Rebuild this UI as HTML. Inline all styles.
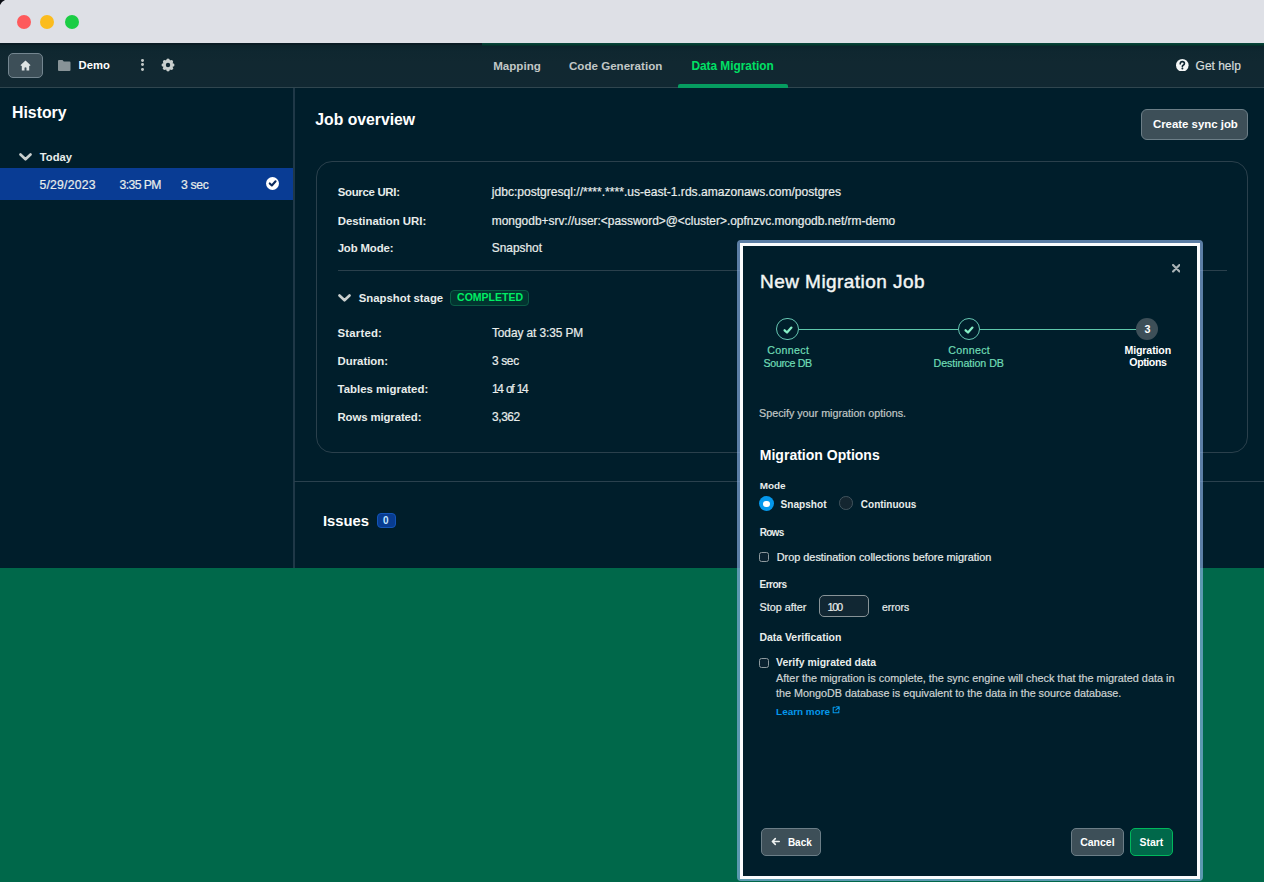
<!DOCTYPE html>
<html><head><meta charset="utf-8"><style>
html,body{margin:0;padding:0;}
body{width:1264px;height:882px;overflow:hidden;position:relative;background:#00684a;font-family:"Liberation Sans",sans-serif;}
.t{position:absolute;white-space:nowrap;line-height:1;}
.t:not([style*="font-weight"]){-webkit-text-stroke:0.2px currentColor;}
</style></head><body>
<div style="position:absolute;left:0;top:0;width:1264px;height:43.4px;background:#dee0e6;"></div>
<div style="position:absolute;left:0;top:43.4px;width:1264px;height:43.6px;background:linear-gradient(#0b2128 0px,#0f2730 8px,#112831 20px,#112832 100%);"></div>
<div style="position:absolute;left:0;top:87px;width:1264px;height:1px;background:#30464f;"></div>
<div style="position:absolute;left:0;top:43.4px;width:482px;height:2px;background:#0a1c24;"></div>
<div style="position:absolute;left:482px;top:43.4px;width:782px;height:2.2px;background:linear-gradient(#064a3c,#042c27);"></div>
<div style="position:absolute;left:0;top:88px;width:1264px;height:480px;background:#001e2b;"></div>
<div style="position:absolute;left:0;top:568px;width:1264px;height:314px;background:#00684a;"></div>
<svg style="position:absolute;left:0;top:0" width="6" height="6" viewBox="0 0 6 6"><path d="M0 0 L5 0 Q1.5 1.5 0 5 Z" fill="#0a0d14"/></svg>
<div style="position:absolute;left:16.5px;top:15.3px;width:14px;height:14px;border-radius:50%;background:#fe5a5c;"></div>
<div style="position:absolute;left:40.4px;top:15.3px;width:14px;height:14px;border-radius:50%;background:#fbbc1e;"></div>
<div style="position:absolute;left:64.5px;top:15.3px;width:14px;height:14px;border-radius:50%;background:#1bcd45;"></div>
<div style="position:absolute;left:8px;top:53px;width:33px;height:22.5px;border:1px solid #748690;border-radius:5px;background:#3d4f58;"></div>
<svg style="position:absolute;left:20px;top:59.5px" width="11" height="11" viewBox="0 0 11 11"><path d="M5.5 0.6 L10.6 5.2 L9.4 5.9 L9.2 5.7 L9.2 10.6 L6.5 10.6 L6.5 7.8 Q5.5 6.9 4.5 7.8 L4.5 10.6 L1.8 10.6 L1.8 5.7 L1.6 5.9 L0.4 5.2 Z" fill="#dfe4e3"/></svg>
<svg style="position:absolute;left:58px;top:59.5px" width="12.5" height="11" viewBox="0 0 12.5 11"><path d="M0 1 Q0 0 1 0 L4.5 0 L5.8 1.6 L11.5 1.6 Q12.5 1.6 12.5 2.6 L12.5 10 Q12.5 11 11.5 11 L1 11 Q0 11 0 10 Z" fill="#889397"/></svg>
<div class="t" style="left:78.60px;top:60.00px;font-size:11.230px;color:#ffffff;font-weight:700;">Demo</div>
<div style="position:absolute;left:141.2px;top:59.0px;width:2.8px;height:2.8px;border-radius:50%;background:#c1c7c6;"></div>
<div style="position:absolute;left:141.2px;top:63.4px;width:2.8px;height:2.8px;border-radius:50%;background:#c1c7c6;"></div>
<div style="position:absolute;left:141.2px;top:67.8px;width:2.8px;height:2.8px;border-radius:50%;background:#c1c7c6;"></div>
<svg style="position:absolute;left:160.6px;top:58.2px" width="14" height="14" viewBox="-7 -7 14 14"><g fill="#c9cfce"><circle cx="4.75" cy="0.00" r="1.75"/><circle cx="3.36" cy="3.36" r="1.75"/><circle cx="0.00" cy="4.75" r="1.75"/><circle cx="-3.36" cy="3.36" r="1.75"/><circle cx="-4.75" cy="0.00" r="1.75"/><circle cx="-3.36" cy="-3.36" r="1.75"/><circle cx="-0.00" cy="-4.75" r="1.75"/><circle cx="3.36" cy="-3.36" r="1.75"/><circle r="4.9"/></g><circle r="2.2" fill="#112733"/></svg>
<div class="t" style="left:493.20px;top:61.00px;font-size:11.580px;color:#c1c7c6;font-weight:700;">Mapping</div>
<div class="t" style="left:569.00px;top:61.00px;font-size:11.580px;color:#c1c7c6;font-weight:700;">Code Generation</div>
<div class="t" style="left:691.40px;top:61.00px;font-size:11.850px;color:#00e065;font-weight:700;">Data Migration</div>
<div style="position:absolute;left:677.5px;top:84px;width:110px;height:4px;background:#069c60;border-radius:2px 2px 0 0;"></div>
<svg style="position:absolute;left:1176.4px;top:58.9px" width="12.6" height="12.6" viewBox="0 0 16 16"><circle cx="8" cy="8" r="8" fill="#f4f6f6"/><path d="M5.4 6.1 Q5.5 3.4 8 3.4 Q10.7 3.4 10.7 5.8 Q10.7 7.3 9.1 8 Q8.1 8.5 8.1 9.6" stroke="#112733" stroke-width="2.1" fill="none" stroke-linecap="round"/><circle cx="8.1" cy="12.2" r="1.25" fill="#112733"/></svg>
<div class="t" style="left:1195.60px;top:60.00px;font-size:11.983px;color:#d5dcdc;">Get help</div>
<div style="position:absolute;left:293px;top:88px;width:2px;height:480px;background:#1f3847;"></div>
<div class="t" style="left:12.00px;top:105.00px;font-size:15.847px;color:#ffffff;font-weight:700;">History</div>
<svg style="position:absolute;left:19px;top:152.5px" width="13" height="8" viewBox="0 0 13 8"><path d="M1.5 1.5 L6.5 6.3 L11.5 1.5" stroke="#c9cfce" stroke-width="2.6" fill="none" stroke-linecap="round" stroke-linejoin="round"/></svg>
<div class="t" style="left:39.80px;top:152.00px;font-size:11.217px;color:#e8edeb;font-weight:700;">Today</div>
<div style="position:absolute;left:0;top:168px;width:293px;height:32px;background:#093c94;"></div>
<div class="t" style="left:39.40px;top:179.00px;font-size:12.200px;color:#e8edeb;letter-spacing:0.228px;">5/29/2023</div>
<div class="t" style="left:119.60px;top:179.00px;font-size:12.200px;color:#e8edeb;letter-spacing:-0.606px;">3:35 PM</div>
<div class="t" style="left:180.90px;top:179.00px;font-size:12.200px;color:#e8edeb;letter-spacing:-0.290px;">3 sec</div>
<svg style="position:absolute;left:265.8px;top:176.6px" width="13" height="13" viewBox="0 0 16 16"><circle cx="8" cy="8" r="8" fill="#ffffff"/><path d="M4.6 7.9 L7.2 10.5 L11.8 5.2" stroke="#0b2a5e" stroke-width="2.5" fill="none" stroke-linecap="round" stroke-linejoin="round"/></svg>
<div class="t" style="left:315.30px;top:112.00px;font-size:15.751px;color:#ffffff;font-weight:700;">Job overview</div>
<div style="position:absolute;left:1141.2px;top:108.7px;width:105.3px;height:29.2px;border:1px solid #6c7e87;border-radius:6px;background:#3d4f58;"></div>
<div class="t" style="left:1152.90px;top:119.00px;font-size:11.427px;color:#ffffff;font-weight:700;">Create sync job</div>
<div style="position:absolute;left:315.5px;top:161.3px;width:930.5px;height:289.5px;border:1px solid #2a404c;border-radius:16px;"></div>
<div class="t" style="left:337.70px;top:187.00px;font-size:11.400px;color:#e8edeb;font-weight:700;letter-spacing:-0.295px;">Source URI:</div>
<div class="t" style="left:337.70px;top:216.00px;font-size:11.400px;color:#e8edeb;font-weight:700;letter-spacing:-0.005px;">Destination URI:</div>
<div class="t" style="left:337.70px;top:243.00px;font-size:11.400px;color:#e8edeb;font-weight:700;letter-spacing:-0.150px;">Job Mode:</div>
<div class="t" style="left:491.80px;top:186.00px;font-size:12.076px;color:#e8edeb;">jdbc:postgresql://****.****.us-east-1.rds.amazonaws.com/postgres</div>
<div class="t" style="left:491.80px;top:216.00px;font-size:11.930px;color:#e8edeb;">mongodb+srv://user:&lt;password&gt;@&lt;cluster&gt;.opfnzvc.mongodb.net/rm-demo</div>
<div class="t" style="left:491.80px;top:243.00px;font-size:11.880px;color:#e8edeb;">Snapshot</div>
<div style="position:absolute;left:337.5px;top:270px;width:889px;height:1px;background:#2a404c;"></div>
<svg style="position:absolute;left:338px;top:294px" width="13" height="8" viewBox="0 0 13 8"><path d="M1.5 1.5 L6.5 6.3 L11.5 1.5" stroke="#c9cfce" stroke-width="2.6" fill="none" stroke-linecap="round" stroke-linejoin="round"/></svg>
<div class="t" style="left:358.80px;top:293.00px;font-size:11.335px;color:#e8edeb;font-weight:700;">Snapshot stage</div>
<div style="position:absolute;left:450px;top:290px;width:77px;height:13.5px;border:1px solid #0a5c45;border-radius:4px;background:#023430;"></div>
<div class="t" style="left:457.10px;top:292.00px;font-size:10.513px;color:#00ed64;font-weight:700;">COMPLETED</div>
<div class="t" style="left:337.50px;top:328.00px;font-size:11.400px;color:#e8edeb;font-weight:700;letter-spacing:0.189px;">Started:</div>
<div class="t" style="left:492.00px;top:328.00px;font-size:11.900px;color:#e8edeb;letter-spacing:-0.094px;">Today at 3:35 PM</div>
<div class="t" style="left:337.50px;top:356.00px;font-size:11.400px;color:#e8edeb;font-weight:700;letter-spacing:-0.008px;">Duration:</div>
<div class="t" style="left:492.00px;top:356.00px;font-size:11.900px;color:#e8edeb;letter-spacing:-0.336px;">3 sec</div>
<div class="t" style="left:337.50px;top:384.00px;font-size:11.400px;color:#e8edeb;font-weight:700;letter-spacing:0.028px;">Tables migrated:</div>
<div class="t" style="left:492.00px;top:384.00px;font-size:11.900px;color:#e8edeb;letter-spacing:-1.330px;word-spacing:1.5px;">14 of 14</div>
<div class="t" style="left:337.50px;top:412.00px;font-size:11.400px;color:#e8edeb;font-weight:700;letter-spacing:-0.116px;">Rows migrated:</div>
<div class="t" style="left:492.00px;top:412.00px;font-size:11.900px;color:#e8edeb;letter-spacing:-0.395px;">3,362</div>
<div style="position:absolute;left:294px;top:481px;width:970px;height:1px;background:#2a414e;"></div>
<div class="t" style="left:322.90px;top:514.00px;font-size:14.775px;color:#ffffff;font-weight:700;">Issues</div>
<div style="position:absolute;left:376.7px;top:513.1px;width:17.3px;height:12.8px;border:1px solid #1254b7;border-radius:4px;background:#083c90;"></div>
<div class="t" style="left:383.00px;top:516.00px;font-size:10.069px;color:#c3e7fe;font-weight:700;">0</div>
<div style="position:absolute;left:737px;top:240px;width:460px;height:635px;border:3px solid rgba(142,181,235,0.64);border-radius:4px;"></div>
<div style="position:absolute;left:740px;top:243px;width:454px;height:629.5px;border:3px solid #fafcfd;background:#001e2b;"></div>
<div class="t" style="left:760.00px;top:272.00px;font-size:19.000px;color:#f2f5f4;letter-spacing:0.453px;-webkit-text-stroke:0.45px #f2f5f4;">New Migration Job</div>
<svg style="position:absolute;left:1171.5px;top:264.3px" width="8.5" height="8.5" viewBox="0 0 8 8"><path d="M1 1 L7 7 M7 1 L1 7" stroke="#a9b3b6" stroke-width="2" stroke-linecap="round"/></svg>
<div style="position:absolute;left:799px;top:328.8px;width:159px;height:1.5px;background:#5fc8ac;"></div>
<div style="position:absolute;left:980px;top:328.8px;width:156.5px;height:1.5px;background:#5fc8ac;"></div>
<div style="position:absolute;left:776.4px;top:317.6px;width:20.2px;height:20.2px;border:1.6px solid #66c6b2;border-radius:50%;"></div>
<svg style="position:absolute;left:781.9px;top:323.5px" width="12" height="12" viewBox="0 0 12 12"><path d="M2.6 6.3 L5 8.5 L9.4 3.6" stroke="#86efc6" stroke-width="2.3" fill="none" stroke-linecap="round" stroke-linejoin="round"/></svg>
<div style="position:absolute;left:957.5px;top:317.6px;width:20.2px;height:20.2px;border:1.6px solid #66c6b2;border-radius:50%;"></div>
<svg style="position:absolute;left:963.0px;top:323.5px" width="12" height="12" viewBox="0 0 12 12"><path d="M2.6 6.3 L5 8.5 L9.4 3.6" stroke="#86efc6" stroke-width="2.3" fill="none" stroke-linecap="round" stroke-linejoin="round"/></svg>
<div style="position:absolute;left:1136.4px;top:318px;width:22px;height:22px;border-radius:50%;background:#3d4f58;"></div>
<div class="t" style="left:1144.50px;top:324.00px;font-size:10.788px;color:#ffffff;font-weight:700;">3</div>
<div class="t" style="left:767.30px;top:345.00px;font-size:10.700px;color:#6fdcb6;letter-spacing:0.291px;">Connect</div>
<div class="t" style="left:763.60px;top:358.00px;font-size:10.700px;color:#6fdcb6;letter-spacing:-0.393px;">Source DB</div>
<div class="t" style="left:948.20px;top:345.00px;font-size:10.700px;color:#6fdcb6;letter-spacing:0.291px;">Connect</div>
<div class="t" style="left:933.60px;top:358.00px;font-size:10.700px;color:#6fdcb6;letter-spacing:-0.075px;">Destination DB</div>
<div class="t" style="left:1124.50px;top:345.00px;font-size:10.600px;color:#ffffff;font-weight:700;letter-spacing:-0.124px;">Migration</div>
<div class="t" style="left:1129.30px;top:357.00px;font-size:10.600px;color:#ffffff;font-weight:700;letter-spacing:-0.407px;">Options</div>
<div class="t" style="left:759.00px;top:408.00px;font-size:10.751px;color:#c1c7c6;">Specify your migration options.</div>
<div class="t" style="left:759.80px;top:448.00px;font-size:14.027px;color:#ffffff;font-weight:700;">Migration Options</div>
<div class="t" style="left:759.70px;top:481.00px;font-size:9.958px;color:#e8edeb;font-weight:700;">Mode</div>
<div style="position:absolute;left:758.8px;top:496px;width:15.4px;height:15.4px;border-radius:50%;background:#0498ec;"></div>
<div style="position:absolute;left:763.3px;top:500.6px;width:6.4px;height:6.4px;border-radius:50%;background:#ffffff;"></div>
<div class="t" style="left:780.60px;top:500.00px;font-size:10.097px;color:#e8edeb;font-weight:700;">Snapshot</div>
<div style="position:absolute;left:839px;top:496px;width:11.6px;height:11.6px;border:1.9px solid #43555e;border-radius:50%;background:#142630;"></div>
<div class="t" style="left:860.80px;top:500.00px;font-size:10.010px;color:#e8edeb;font-weight:700;">Continuous</div>
<div class="t" style="left:759.70px;top:528.00px;font-size:10.000px;color:#e8edeb;font-weight:700;letter-spacing:-0.723px;">Rows</div>
<div style="position:absolute;left:759px;top:551.8px;width:8px;height:8px;border:1.5px solid #8e9a9f;border-radius:2.5px;background:#0a2230;"></div>
<div class="t" style="left:776.70px;top:552.00px;font-size:10.895px;color:#e8edeb;">Drop destination collections before migration</div>
<div class="t" style="left:759.50px;top:580.00px;font-size:10.000px;color:#e8edeb;font-weight:700;letter-spacing:-0.503px;">Errors</div>
<div class="t" style="left:759.50px;top:602.00px;font-size:10.839px;color:#e8edeb;">Stop after</div>
<div style="position:absolute;left:818.8px;top:595.4px;width:48.5px;height:19.2px;border:1px solid #889397;border-radius:5px;background:#112733;"></div>
<div class="t" style="left:827.50px;top:602.00px;font-size:11.000px;color:#e8edeb;letter-spacing:-1.427px;">100</div>
<div class="t" style="left:882.10px;top:603.00px;font-size:10.339px;color:#e8edeb;">errors</div>
<div class="t" style="left:759.40px;top:633.00px;font-size:10.464px;color:#e8edeb;font-weight:700;">Data Verification</div>
<div style="position:absolute;left:759px;top:657.8px;width:8px;height:8px;border:1.5px solid #8e9a9f;border-radius:2.5px;background:#0a2230;"></div>
<div class="t" style="left:776.10px;top:658.00px;font-size:10.461px;color:#e8edeb;font-weight:700;">Verify migrated data</div>
<div class="t" style="left:776.10px;top:673.00px;font-size:10.862px;color:#cdd3d2;">After the migration is complete, the sync engine will check that the migrated data in</div>
<div class="t" style="left:776.10px;top:688.00px;font-size:10.792px;color:#cdd3d2;">the MongoDB database is equivalent to the data in the source database.</div>
<div class="t" style="left:776.10px;top:707.00px;font-size:9.915px;color:#0498ec;font-weight:700;">Learn more</div>
<svg style="position:absolute;left:832px;top:705.5px" width="8" height="8" viewBox="0 0 8 8"><path d="M3.2 1.2 L1.2 1.2 L1.2 6.8 L6.8 6.8 L6.8 4.8 M4.4 0.8 L7.2 0.8 L7.2 3.6 M7.2 0.8 L3.8 4.2" stroke="#0498ec" stroke-width="1.1" fill="none" stroke-linecap="round" stroke-linejoin="round"/></svg>
<div style="position:absolute;left:761px;top:827.6px;width:58px;height:26.2px;border:1px solid #6c7e87;border-radius:5px;background:#3d4f58;"></div>
<svg style="position:absolute;left:771.2px;top:836.8px" width="9" height="9" viewBox="0 0 9 9"><path d="M8.2 4.5 L1.5 4.5 M4.3 1.6 L1.4 4.5 L4.3 7.4" stroke="#f0f3f2" stroke-width="1.6" fill="none" stroke-linecap="round" stroke-linejoin="round"/></svg>
<div class="t" style="left:787.90px;top:838.00px;font-size:10.039px;color:#ffffff;font-weight:700;">Back</div>
<div style="position:absolute;left:1071.2px;top:827.6px;width:50.7px;height:26.3px;border:1px solid #6c7e87;border-radius:5px;background:#3d4f58;"></div>
<div class="t" style="left:1080.20px;top:838.00px;font-size:10.490px;color:#ffffff;font-weight:700;">Cancel</div>
<div style="position:absolute;left:1130px;top:827.6px;width:41.3px;height:26.3px;border:1px solid #00b85c;border-radius:5px;background:#00684a;"></div>
<div class="t" style="left:1139.50px;top:838.00px;font-size:10.446px;color:#ffffff;font-weight:700;">Start</div>
</body></html>
